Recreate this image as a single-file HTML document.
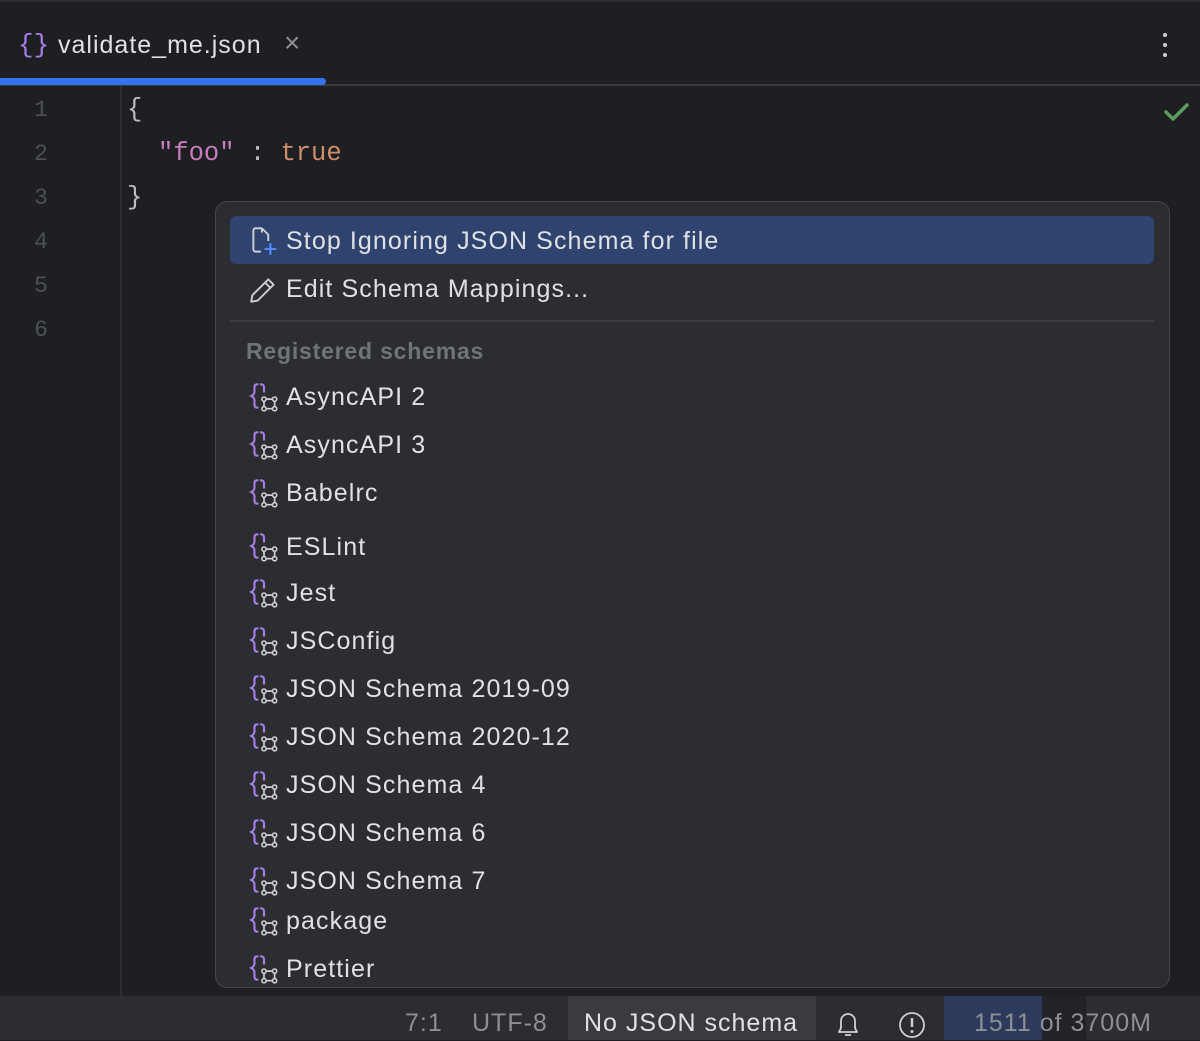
<!DOCTYPE html>
<html><head><meta charset="utf-8"><style>
*{margin:0;padding:0;box-sizing:border-box}
body{width:1200px;height:1040px;background:#1e1f22;position:relative;overflow:hidden;font-family:"Liberation Sans",sans-serif;color:#dfe1e5}
.abs{position:absolute}
.mono{font-family:"Liberation Mono",monospace;font-size:25.5px}
.ln{position:absolute;left:24px;width:34px;text-align:center;color:#4b5059;font-family:"Liberation Mono",monospace;font-size:23px}
.item{position:absolute;left:286px;font-size:25px;letter-spacing:1.1px;color:#dfe1e5;line-height:30px;white-space:nowrap}
.ic{position:absolute;left:247px;width:34px;height:34px}
.st{position:absolute;top:1008px;font-size:25px;line-height:30px;letter-spacing:1px}
</style></head><body>
<div class="abs" style="left:0;top:0;width:1200px;height:2px;background:#2b2d30"></div>
<div class="abs" style="left:18px;top:30px;color:#a77ee6;font-size:26px;font-family:'Liberation Mono',monospace;line-height:30px">{}</div>
<div class="abs" style="left:58px;top:30px;font-size:25px;letter-spacing:1px;line-height:30px;color:#dfe1e5">validate_me.json</div>
<div class="abs" style="left:284px;top:28px;font-size:28px;color:#8c8f94;line-height:30px">×</div>
<div class="abs" style="left:1163px;top:33px;width:4px;height:4px;border-radius:2px;background:#ced0d6"></div>
<div class="abs" style="left:1163px;top:43px;width:4px;height:4px;border-radius:2px;background:#ced0d6"></div>
<div class="abs" style="left:1163px;top:53px;width:4px;height:4px;border-radius:2px;background:#ced0d6"></div>
<div class="abs" style="left:0;top:84px;width:1200px;height:2px;background:#393b40"></div>
<div class="abs" style="left:0;top:78px;width:326px;height:7px;border-radius:0 4px 4px 0;background:#3574f0"></div>
<div class="abs" style="left:120px;top:86px;width:2px;height:910px;background:#2b2d30"></div>
<div class="ln" style="top:97px">1</div>
<div class="ln" style="top:141px">2</div>
<div class="ln" style="top:185px">3</div>
<div class="ln" style="top:229px">4</div>
<div class="ln" style="top:273px">5</div>
<div class="ln" style="top:317px">6</div>
<div class="abs mono" style="left:127px;top:95px;color:#bcbec4">{</div>
<div class="abs mono" style="left:158px;top:139px;color:#bcbec4"><span style="color:#c77dbb">"foo"</span> : <span style="color:#cf8e6d">true</span></div>
<div class="abs mono" style="left:127px;top:183px;color:#bcbec4">}</div>
<svg class="abs" style="left:1163px;top:100px" width="28" height="24" viewBox="0 0 28 24"><path d="M3 12l7 7L24 5" stroke="#5f9a5f" stroke-width="3.5" fill="none" stroke-linecap="round" stroke-linejoin="round"/></svg>
<div class="abs" style="left:215px;top:201px;width:955px;height:787px;background:#2b2d30;border:1.5px solid #43454a;border-radius:12px"></div>
<div class="abs" style="left:230px;top:216px;width:924px;height:48px;background:#2e436e;border-radius:6px"></div>
<svg class="ic" style="top:224px" viewBox="0 0 32 32"><path d="M14 4H8a2 2 0 0 0-2 2v18a2 2 0 0 0 2 2h5M14 4l6 6v6M14 4v4" stroke="#ced0d6" stroke-width="1.8" fill="none" stroke-linejoin="round"/><path d="M22 18v11M16.5 23.5h11" stroke="#548af7" stroke-width="2"/></svg>
<div class="item" style="top:226px">Stop Ignoring JSON Schema for file</div>
<svg class="ic" style="top:273px" viewBox="0 0 32 32"><path d="M4 27l1-6L20 6l5 5-15 15zM17 9l5 5" stroke="#ced0d6" stroke-width="1.8" fill="none" stroke-linejoin="round"/></svg>
<div class="item" style="top:274px">Edit Schema Mappings...</div>
<div class="abs" style="left:230px;top:320px;width:924px;height:2px;background:#393b40"></div>
<div class="item" style="left:246px;top:336px;font-size:23px;letter-spacing:0.8px;font-weight:bold;color:#6f737a">Registered schemas</div>
<svg width="0" height="0" style="position:absolute"><defs><g id="si"><path d="M10 4c-2 0-3 1-3 3v4c0 2-1 3-3 4 2 1 3 2 3 4v4c0 2 1 3 3 3M13 4c2 0 3 1 3 3v4" stroke="#a77ee6" stroke-width="2" fill="none" stroke-linecap="round"/><path d="M17 18h8M17 27h8M16 19v7M26 19v7" stroke="#ced0d6" stroke-width="1.6"/><g fill="#2b2d30" stroke="#ced0d6" stroke-width="1.5"><circle cx="16" cy="18" r="2"/><circle cx="26" cy="18" r="2"/><circle cx="16" cy="27" r="2"/><circle cx="26" cy="27" r="2"/></g></g></defs></svg>
<svg class="ic" style="top:380px" viewBox="0 0 32 32"><use href="#si"/></svg><div class="item" style="top:382px">AsyncAPI 2</div>
<svg class="ic" style="top:428px" viewBox="0 0 32 32"><use href="#si"/></svg><div class="item" style="top:430px">AsyncAPI 3</div>
<svg class="ic" style="top:476px" viewBox="0 0 32 32"><use href="#si"/></svg><div class="item" style="top:478px">Babelrc</div>
<svg class="ic" style="top:530px" viewBox="0 0 32 32"><use href="#si"/></svg><div class="item" style="top:532px">ESLint</div>
<svg class="ic" style="top:576px" viewBox="0 0 32 32"><use href="#si"/></svg><div class="item" style="top:578px">Jest</div>
<svg class="ic" style="top:624px" viewBox="0 0 32 32"><use href="#si"/></svg><div class="item" style="top:626px">JSConfig</div>
<svg class="ic" style="top:672px" viewBox="0 0 32 32"><use href="#si"/></svg><div class="item" style="top:674px">JSON Schema 2019-09</div>
<svg class="ic" style="top:720px" viewBox="0 0 32 32"><use href="#si"/></svg><div class="item" style="top:722px">JSON Schema 2020-12</div>
<svg class="ic" style="top:768px" viewBox="0 0 32 32"><use href="#si"/></svg><div class="item" style="top:770px">JSON Schema 4</div>
<svg class="ic" style="top:816px" viewBox="0 0 32 32"><use href="#si"/></svg><div class="item" style="top:818px">JSON Schema 6</div>
<svg class="ic" style="top:864px" viewBox="0 0 32 32"><use href="#si"/></svg><div class="item" style="top:866px">JSON Schema 7</div>
<svg class="ic" style="top:904px" viewBox="0 0 32 32"><use href="#si"/></svg><div class="item" style="top:906px">package</div>
<svg class="ic" style="top:952px" viewBox="0 0 32 32"><use href="#si"/></svg><div class="item" style="top:954px">Prettier</div>
<div class="abs" style="left:0;top:996px;width:1200px;height:44px;background:#2b2d30"></div>
<div class="abs" style="left:568px;top:996px;width:248px;height:44px;background:#393b40"></div>
<div class="abs" style="left:944px;top:996px;width:98px;height:44px;background:#2e3a5b"></div>
<div class="abs" style="left:1042px;top:996px;width:44px;height:44px;background:#222326"></div>
<div class="st" style="left:405px;color:#8c8f94">7:1</div>
<div class="st" style="left:472px;color:#8c8f94">UTF-8</div>
<div class="st" style="left:584px;color:#dfe1e5">No JSON schema</div>
<svg class="abs" style="left:834px;top:1008px" width="28" height="32" viewBox="0 0 28 32"><path d="M5 24h18l-2-4v-7a7 7 0 0 0-14 0v7zM11 27h6" stroke="#ced0d6" stroke-width="1.8" fill="none" stroke-linejoin="round"/></svg>
<svg class="abs" style="left:896px;top:1009px" width="32" height="32" viewBox="0 0 32 32"><circle cx="16" cy="16" r="12" stroke="#ced0d6" stroke-width="1.8" fill="none"/><path d="M16 9v9" stroke="#ced0d6" stroke-width="2.4"/><circle cx="16" cy="22.5" r="1.5" fill="#ced0d6"/></svg>
<div class="st" style="left:974px;color:#8c8f94">1511 of 3700M</div>
</body></html>
